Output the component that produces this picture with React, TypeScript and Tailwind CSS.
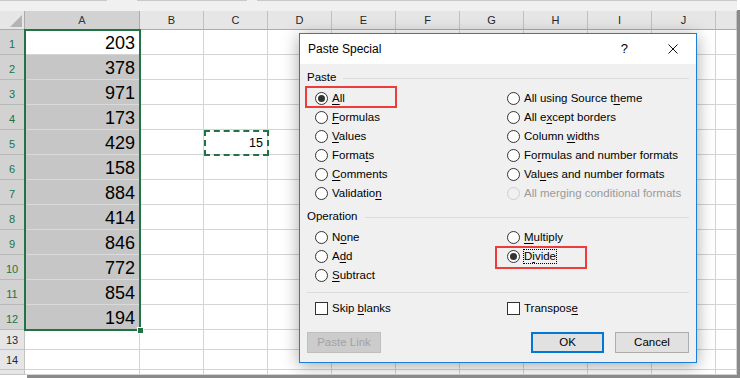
import React from "react";

const COLS = [
  { k: "A", w: "w-[115px]" },
  { k: "B", w: "w-[64px]" },
  { k: "C", w: "w-[64px]" },
  { k: "D", w: "w-[64px]" },
  { k: "E", w: "w-[64px]" },
  { k: "F", w: "w-[64px]" },
  { k: "G", w: "w-[64px]" },
  { k: "H", w: "w-[64px]" },
  { k: "I", w: "w-[64px]" },
  { k: "J", w: "w-[64px]" },
  { k: "", w: "w-[21px]" },
];

const VALUES = [203, 378, 971, 173, 429, 158, 884, 414, 846, 772, 854, 194];

type Label = [string, string, string];

function Keyed({ label }: { label: Label }) {
  return (
    <span className="whitespace-pre">
      {label[0]}
      <span className="underline underline-offset-2">{label[1]}</span>
      {label[2]}
    </span>
  );
}

function Radio({ checked, disabled }: { checked?: boolean; disabled?: boolean }) {
  return (
    <span
      className={
        disabled
          ? "w-[13px] h-[13px] shrink-0 rounded-full border border-[#cfcfcf] bg-[#f0f0f0]"
          : "w-[13px] h-[13px] shrink-0 rounded-full border border-[#333] bg-white flex items-center justify-center"
      }
    >
      {checked && <span className="w-[7px] h-[7px] rounded-full bg-[#333]" />}
    </span>
  );
}

function RadioRow({
  label,
  checked,
  disabled,
  focus,
}: {
  label?: Label;
  checked?: boolean;
  disabled?: boolean;
  focus?: boolean;
}) {
  if (!label) return <div className="h-[19px]" />;
  return (
    <div className="h-[19px] flex items-center gap-[4px]">
      <Radio checked={checked} disabled={disabled} />
      {disabled ? (
        <span className="text-[#9a9a9a]">{label[0]}</span>
      ) : focus ? (
        <span className="border border-dotted border-black -ml-[1px] leading-[13px]">
          <Keyed label={label} />
        </span>
      ) : (
        <Keyed label={label} />
      )}
    </div>
  );
}

function GroupLabel({ text }: { text: string }) {
  return (
    <div className="h-[16px] flex items-center">
      <span>{text}</span>
      <span className="flex-1 h-px bg-[#dcdcdc] ml-[7px]" />
    </div>
  );
}

function Dialog() {
  const pasteLeft: Label[] = [
    ["", "A", "ll"],
    ["", "F", "ormulas"],
    ["", "V", "alues"],
    ["Forma", "t", "s"],
    ["", "C", "omments"],
    ["Validatio", "n", ""],
  ];
  const pasteRight: Label[] = [
    ["All using Source t", "h", "eme"],
    ["All e", "x", "cept borders"],
    ["Column ", "w", "idths"],
    ["Fo", "r", "mulas and number formats"],
    ["Val", "u", "es and number formats"],
    ["All merging conditional formats", "", ""],
  ];

  return (
    <div className="absolute left-[299px] top-[33px] w-[398px] h-[330px] border border-[#1a7fd6] bg-[#f0f0f0] shadow-[0_3px_16px_rgba(0,0,0,0.35)] font-['Liberation_Sans',Arial,sans-serif] text-[11.5px] text-black">
      <div className="h-[30px] bg-white flex items-center pl-[8px] pr-[18px]">
        <span className="text-[12px]">Paste Special</span>
        <span className="ml-auto text-[13px] mr-[40px]">?</span>
        <svg width="10" height="10" viewBox="0 0 10 10">
          <path d="M0.5 0.5 L9.5 9.5 M9.5 0.5 L0.5 9.5" stroke="#111" strokeWidth="1" />
        </svg>
      </div>

      <div className="h-[298px] px-[7px] pt-[6px] flex flex-col">
        <GroupLabel text="Paste" />
        <div className="mt-[3px] pl-[8px] grid grid-cols-[192px_1fr]">
          <div className="flex flex-col">
            {pasteLeft.map((l, i) => (
              <RadioRow key={i} label={l} checked={i === 0} />
            ))}
          </div>
          <div className="flex flex-col">
            {pasteRight.map((l, i) => (
              <RadioRow key={i} label={l} disabled={i === 5} />
            ))}
          </div>
        </div>

        <div className="mt-[6px]">
          <GroupLabel text="Operation" />
        </div>
        <div className="mt-[3px] pl-[8px] grid grid-cols-[192px_1fr]">
          <div className="flex flex-col">
            <RadioRow label={["N", "o", "ne"]} />
            <RadioRow label={["A", "d", "d"]} />
            <RadioRow label={["", "S", "ubtract"]} />
          </div>
          <div className="flex flex-col">
            <RadioRow label={["", "M", "ultiply"]} />
            <RadioRow label={["D", "i", "vide"]} checked focus />
            <RadioRow />
          </div>
        </div>

        <div className="mt-[7px] h-px bg-[#dcdcdc]" />

        <div className="mt-[6px] pl-[8px] grid grid-cols-[192px_1fr]">
          <div className="h-[19px] flex items-center gap-[4px]">
            <span className="w-[13px] h-[13px] border border-[#333] bg-white" />
            <Keyed label={["Skip ", "b", "lanks"]} />
          </div>
          <div className="h-[19px] flex items-center gap-[4px]">
            <span className="w-[13px] h-[13px] border border-[#333] bg-white" />
            <Keyed label={["Transpos", "e", ""]} />
          </div>
        </div>

        <div className="mt-[14px] flex items-center">
          <div className="w-[74px] h-[21px] border border-[#bfbfbf] bg-[#cccccc] text-[#a3a3a3] flex items-center justify-center">
            Paste Link
          </div>
          <div className="ml-auto w-[73px] h-[21px] border-2 border-[#0078d7] bg-[#e1e1e1] flex items-center justify-center">
            OK
          </div>
          <div className="ml-[11px] w-[74px] h-[21px] border border-[#adadad] bg-[#e1e1e1] flex items-center justify-center">
            Cancel
          </div>
        </div>
      </div>

      {/* red annotation boxes */}
      <div className="absolute left-[5px] top-[52px] w-[92px] h-[22px] border-2 border-[#ee3b3b]" />
      <div className="absolute left-[195px] top-[212px] w-[92px] h-[23px] border-2 border-[#ee3b3b]" />
    </div>
  );
}

function SheetRow({ n }: { n: number }) {
  const selected = n >= 1 && n <= 12;
  const h = n <= 12 ? "h-[25px]" : n <= 14 ? "h-[20px]" : "h-[5px]";
  return (
    <div className={`flex ${h}`}>
      <div
        className={
          selected
            ? "w-[25px] shrink-0 bg-[#d2d2d2] border-r border-b border-[#b8b8b8] flex items-center justify-center pt-[5px] text-[11px] text-[#217346]"
            : "w-[25px] shrink-0 bg-[#e6e6e6] border-r border-b border-[#c4c4c4] flex items-center justify-center pt-[1px] text-[11px] text-[#1f2b3a]"
        }
      >
        {n <= 14 ? n : ""}
      </div>
      {COLS.map((c) => {
        if (c.k === "A" && selected) {
          return (
            <div
              key={c.k}
              className={
                n === 1
                  ? `${c.w} shrink-0 bg-white border-r border-b border-[#d4d4d4] flex items-center justify-end pr-[4px] pt-[2px] text-[18px] text-black`
                  : `${c.w} shrink-0 bg-[#c6c6c6] border-r border-b border-[#dadada] flex items-center justify-end pr-[4px] pt-[2px] text-[18px] text-black`
              }
            >
              {VALUES[n - 1]}
            </div>
          );
        }
        if (c.k === "C" && n === 5) {
          return (
            <div
              key={c.k}
              className={`${c.w} shrink-0 border-r border-b border-[#d4d4d4] flex items-center justify-end pr-[4px] pt-[2px] text-[12.5px] text-black`}
            >
              15
            </div>
          );
        }
        return <div key={c.k} className={`${c.w} shrink-0 border-r border-b border-[#d4d4d4]`} />;
      })}
    </div>
  );
}

export default function App() {
  const rows = Array.from({ length: 15 }, (_, i) => i + 1);
  return (
    <div className="w-[740px] h-[378px] bg-white overflow-hidden font-['Liberation_Sans',Arial,sans-serif] flex flex-col">
      <div className="flex h-[375px]">
        <div className="relative w-[737px] h-[375px] overflow-hidden">
          {/* top strip */}
          <div className="h-[11px] flex items-start bg-[#f0f0f0]">
            <div className="w-[107px] h-px bg-[#c8c8c8]" />
            <div className="ml-[30px] w-[110px] h-px bg-[#c8c8c8]" />
            <div className="ml-[10px] flex-1 h-px bg-[#c8c8c8]" />
          </div>

          {/* column headers */}
          <div className="flex h-[19px]">
            <div className="w-[25px] shrink-0 bg-[#e6e6e6] border-r border-b border-[#ababab] flex items-end justify-end pr-[2px] pb-[2px]">
              <svg width="12" height="12" viewBox="0 0 12 12">
                <path d="M12 0 L12 12 L0 12 Z" fill="#b4b4b4" />
              </svg>
            </div>
            {COLS.map((c) => (
              <div
                key={c.k}
                className={
                  c.k === "A"
                    ? `${c.w} shrink-0 bg-[#d2d2d2] border-r border-b border-[#ababab] flex items-center justify-center text-[11px] text-[#3a3a3a]`
                    : `${c.w} shrink-0 bg-[#e6e6e6] border-r border-b border-[#c0c0c0] border-b-[#ababab] flex items-center justify-center text-[11px] text-[#262626]`
                }
              >
                {c.k}
              </div>
            ))}
          </div>

          {rows.map((n) => (
            <SheetRow key={n} n={n} />
          ))}

          {/* selection outline A1:A12 */}
          <div className="absolute left-[24px] top-[29px] w-[117px] h-[302px] border-2 border-[#217346]" />
          <div className="absolute left-[137px] top-[327px] w-[7px] h-[7px] bg-[#217346] border border-white" />
          {/* copy marquee on C5 */}
          <div className="absolute left-[204px] top-[130px] w-[65px] h-[26px] border-2 border-dashed border-[#217346]" />

          <Dialog />
        </div>
        <div className="mt-[10px] w-[3px] bg-[#8a8a8a]" />
      </div>
      <div className="ml-[27px] h-[3px] bg-[#8a8a8a]" />
    </div>
  );
}
